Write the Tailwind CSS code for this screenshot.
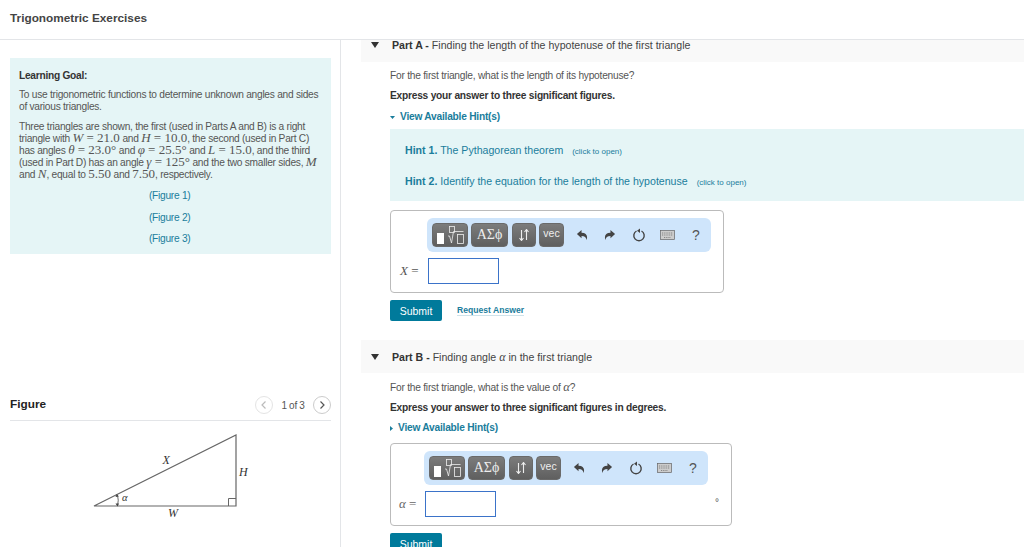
<!DOCTYPE html>
<html lang="en">
<head>
    <meta charset="UTF-8">
    <meta name="viewport" content="width=device-width, initial-scale=1.0">
    <title>Trigonometric Exercises</title>
    <script src="https://cdn.jsdelivr.net/npm/@tailwindcss/browser@4"></script>
</head>
<body class="h-[547px] overflow-hidden bg-white font-['Liberation_Sans',Arial,sans-serif] text-[#555]">
    <!-- Page title -->
    <header class="h-[40px] border-b border-[#e3e5e8] pl-[10px] pt-[11px]">
        <h1 class="text-[11.8px] leading-[15px] font-bold text-[#444]">Trigonometric Exercises</h1>
    </header>

    <div class="flex h-[507px]">
        <!-- Left column -->
        <aside class="w-[341px] shrink-0 border-r border-[#e3e5e8] pl-[10px] pr-[9px] pt-[18px]">
            <div class="h-[196px] bg-[#e5f5f6] pl-[9px] pr-[8px] pt-[12px] text-[10.2px] leading-[12px] tracking-[-0.27px]">
                <p class="font-bold text-[#333]">Learning Goal:</p>
                <p class="mt-[7px]">To use trigonometric functions to determine unknown angles and sides of various triangles.</p>
                <p class="mt-[8px]">Three triangles are shown, the first (used in Parts A and B) is a right triangle with <span class="font-['Liberation_Serif',serif] text-[13px] leading-[0] tracking-normal"><i>W</i> = 21.0</span> and <span class="font-['Liberation_Serif',serif] text-[13px] leading-[0] tracking-normal"><i>H</i> = 10.0</span>, the second (used in Part C) has angles <span class="font-['Liberation_Serif',serif] text-[13px] leading-[0] tracking-normal"><i>θ</i> = 23.0°</span> and <span class="font-['Liberation_Serif',serif] text-[13px] leading-[0] tracking-normal"><i>φ</i> = 25.5°</span> and <span class="font-['Liberation_Serif',serif] text-[13px] leading-[0] tracking-normal"><i>L</i> = 15.0</span>, and the third (used in Part D) has an angle <span class="font-['Liberation_Serif',serif] text-[13px] leading-[0] tracking-normal"><i>γ</i> = 125°</span> and the two smaller sides, <i class="font-['Liberation_Serif',serif] text-[13px] leading-[0] tracking-normal">M</i> and <i class="font-['Liberation_Serif',serif] text-[13px] leading-[0] tracking-normal">N</i>, equal to <span class="font-['Liberation_Serif',serif] text-[13px] leading-[0] tracking-normal">5.50</span> and <span class="font-['Liberation_Serif',serif] text-[13px] leading-[0] tracking-normal">7.50</span>, respectively.</p>
                <div class="mt-[9px] flex flex-col gap-[9.5px] pl-[130px] text-[#1a7d9c]">
                    <a>(Figure 1)</a>
                    <a>(Figure 2)</a>
                    <a>(Figure 3)</a>
                </div>
            </div>

            <!-- Figure -->
            <div class="mt-[142px] flex h-[25px] items-start justify-between border-b border-[#e3e5e8] pb-[6px]">
                <h2 class="text-[11.8px] leading-[16px] font-bold text-[#222]">Figure</h2>
                <div class="flex items-center">
                    <span class="flex size-[18px] items-center justify-center rounded-full border border-[#e4e4e4] text-[#bbb]">
                        <svg class="size-[10px]" viewBox="0 0 10 10" fill="none" stroke="currentColor" stroke-width="1.2"><path d="M6.5 1.5 3 5l3.5 3.5"/></svg>
                    </span>
                    <span class="w-[40px] text-center text-[10px] tracking-[-0.3px] text-[#555]">1 of 3</span>
                    <span class="flex size-[18px] items-center justify-center rounded-full border border-[#ccc] text-[#555]">
                        <svg class="size-[10px]" viewBox="0 0 10 10" fill="none" stroke="currentColor" stroke-width="1.2"><path d="M3.500 1.500 7 5 3.500 8.500"/></svg>
                    </span>
                </div>
            </div>
            <svg class="-ml-[10px] block" width="340" height="100" viewBox="0 422 340 100" font-family="'Liberation Serif', serif" font-style="italic" font-size="12" fill="#333">
                <path d="M94 507 236 436V507Z" fill="none" stroke="#666" stroke-width="1.2"/>
                <path d="M228.500 507V499.500H236" fill="none" stroke="#666"/>
                <path d="M117.500 496Q119 501 117.500 507" fill="none" stroke="#444" stroke-width="0.8"/>
                <path d="M115.500 498 116.800 495 118.800 497.500M115.500 504.500 117.500 507.500 119 504.500" fill="#444"/>
                <text x="162.500" y="465">X</text>
                <text x="239" y="477">H</text>
                <text x="168" y="518">W</text>
                <text x="122" y="502" font-size="10.500">α</text>
            </svg>
        </aside>

        <!-- Right column -->
        <main class="ml-[20px] min-w-0 flex-1 text-[10.2px] leading-[12px] tracking-[-0.23px]">
            <!-- Part A -->
            <div class="flex h-[22px] bg-[#f9f9f9]">
                <svg class="ml-[10px] mt-[2px] h-[6px] w-[8px] shrink-0" viewBox="0 0 8 6" fill="#333"><path d="M0 0h8L4 6z"/></svg>
                <p class="-mt-px ml-[13px] text-[10.6px] tracking-normal text-[#444]"><b class="text-[#333]">Part A -</b> Finding the length of the hypotenuse of the first triangle</p>
            </div>
            <section class="pl-[29px]">
                <p class="pt-[8px]">For the first triangle, what is the length of its hypotenuse?</p>
                <p class="mt-[8px] font-bold text-[#333]">Express your answer to three significant figures.</p>
                <div class="mt-[9px] flex items-center font-bold text-[#1a7d9c]">
                    <svg class="mr-[5px] h-[3px] w-[5px]" viewBox="0 0 5 3" fill="currentColor"><path d="M0 0h5L2.500 3z"/></svg>
                    View Available Hint(s)
                </div>
                <div class="mt-[6px] h-[72px] bg-[#e5f5f6] pl-[15px] pt-[14px] text-[10.6px] leading-[14px] tracking-normal text-[#1a7d9c]">
                    <p><b>Hint 1.</b> The Pythagorean theorem <span class="ml-[6px] text-[8px]">(click to open)</span></p>
                    <p class="mt-[15px]"><b>Hint 2.</b> Identify the equation for the length of the hypotenuse <span class="ml-[6px] text-[8px]">(click to open)</span></p>
                </div>

                <!-- Answer box A -->
                <div class="mt-[9px] h-[83px] w-[334px] rounded-[4px] border border-[#bbb] pl-[36px] pt-[7px] tracking-normal">
                    <div class="flex h-[34px] w-[284px] items-center rounded-[6px] bg-[#cfe5fb] pl-[5px]">
                        <span class="flex h-[24px] w-[36px] items-center justify-center rounded-[4px] border border-[#6a6a6a] bg-gradient-to-b from-[#7c7c7c] to-[#5f5f5f]">
                            <svg width="34" height="20" viewBox="0 0 34 20" fill="none" stroke="#eee" stroke-width="0.8"><rect x="4" y="8" width="7" height="11" fill="#fff" stroke="none"/><rect x="16.500" y="1.500" width="5" height="6"/><path d="M15 11l1.500 0 2 7 2-11.500h10"/><rect x="24.500" y="9.500" width="6" height="9"/></svg>
                        </span>
                        <span class="ml-[3px] flex h-[24px] w-[37px] items-center justify-center rounded-[4px] border border-[#6a6a6a] bg-gradient-to-b from-[#7c7c7c] to-[#5f5f5f] font-['Liberation_Serif',serif] text-[14px] text-[#eee]">ΑΣϕ</span>
                        <span class="ml-[4px] flex h-[24px] w-[24px] items-center justify-center rounded-[4px] border border-[#6a6a6a] bg-gradient-to-b from-[#7c7c7c] to-[#5f5f5f]">
                            <svg width="12" height="12" viewBox="0 0 12 12" fill="none" stroke="#eee" stroke-width="1.1"><path d="M3.500 1v10M1.500 9l2 2.500L5.500 9M8.500 11V1M6.500 3l2-2.500 2 2.500"/></svg>
                        </span>
                        <span class="ml-[3px] flex h-[24px] w-[25px] items-center justify-center rounded-[4px] border border-[#6a6a6a] bg-gradient-to-b from-[#7c7c7c] to-[#5f5f5f] pb-[4px] text-[10.5px] text-[#eee]">vec</span>
                        <span class="ml-[4px] flex w-[28px] justify-center"><svg width="12" height="12" viewBox="0 0 13 13" fill="#444"><path d="M1 5.500 6 1v3c4 0 6 2 6 5 0 1-.3 2-.8 3 .1-3-2-4.500-5.200-4.500V10z"/></svg></span>
                        <span class="flex w-[28px] justify-center"><svg width="12" height="12" viewBox="0 0 13 13" fill="#444"><path d="M12 5.500 7 1v3C3 4 1 6 1 9c0 1 .3 2 .8 3-.1-3 2-4.500 5.200-4.500V10z"/></svg></span>
                        <span class="flex w-[29px] justify-center"><svg width="14" height="14" viewBox="0 0 14 14" fill="none" stroke="#444" stroke-width="1.400"><path d="M4.500 3a5.200 5.200 0 1 0 5 0"/><path d="M8 0.500v4.500l-3-2.200z" fill="#444" stroke="none"/></svg></span>
                        <span class="flex w-[29px] justify-center"><svg width="15" height="10" viewBox="0 0 15 10" fill="#ccc" stroke="#666" stroke-width="0.7"><rect x="0.500" y="0.500" width="14" height="9"/><path d="M2 3h11M2 5h11M4 7.500h7" stroke="#666" stroke-dasharray="1 0.800"/></svg></span>
                        <span class="flex w-[28px] justify-center text-[14px] text-[#555]">?</span>
                    </div>
                    <div class="mt-[6px] flex items-center">
                        <span class="-ml-[27px] w-[28px] font-['Liberation_Serif',serif] text-[13px] text-[#555]"><i>X</i> =</span>
                        <div class="h-[26px] w-[71px] border border-[#3b73c9]"></div>
                    </div>
                </div>

                <div class="mt-[7px] flex items-center tracking-normal">
                    <button class="h-[21px] w-[52px] rounded-[2px] bg-[#007a9b] text-[10.500px] text-white">Submit</button>
                    <a class="ml-[15px] border-b border-[#cfe3ea] text-[8.6px] leading-[10px] font-bold text-[#1a7d9c]">Request Answer</a>
                </div>
            </section>

            <!-- Part B -->
            <div class="mt-[19px] flex h-[33px] items-center bg-[#f9f9f9]">
                <svg class="ml-[10px] h-[6px] w-[8px] shrink-0" viewBox="0 0 8 6" fill="#333"><path d="M0 0h8L4 6z"/></svg>
                <p class="ml-[13px] text-[10.6px] tracking-normal text-[#444]"><b class="text-[#333]">Part B -</b> Finding angle <i class="font-['Liberation_Serif',serif] text-[12px] leading-[0]">α</i> in the first triangle</p>
            </div>
            <section class="pl-[29px]">
                <p class="pt-[9px]">For the first triangle, what is the value of <i class="font-['Liberation_Serif',serif] text-[12.500px] leading-[0] tracking-normal">α</i>?</p>
                <p class="mt-[8px] font-bold text-[#333]">Express your answer to three significant figures in degrees.</p>
                <div class="mt-[8px] flex items-center font-bold text-[#1a7d9c]">
                    <svg class="mr-[5px] h-[5px] w-[3px]" viewBox="0 0 3 5" fill="currentColor"><path d="M0 0v5l3-2.500z"/></svg>
                    View Available Hint(s)
                </div>

                <!-- Answer box B -->
                <div class="relative mt-[9px] h-[83px] w-[342px] rounded-[4px] border border-[#bbb] pl-[33px] pt-[7px] tracking-normal">
                    <div class="flex h-[34px] w-[284px] items-center rounded-[6px] bg-[#cfe5fb] pl-[5px]">
                        <span class="flex h-[24px] w-[36px] items-center justify-center rounded-[4px] border border-[#6a6a6a] bg-gradient-to-b from-[#7c7c7c] to-[#5f5f5f]">
                            <svg width="34" height="20" viewBox="0 0 34 20" fill="none" stroke="#eee" stroke-width="0.8"><rect x="4" y="8" width="7" height="11" fill="#fff" stroke="none"/><rect x="16.500" y="1.500" width="5" height="6"/><path d="M15 11l1.500 0 2 7 2-11.500h10"/><rect x="24.500" y="9.500" width="6" height="9"/></svg>
                        </span>
                        <span class="ml-[3px] flex h-[24px] w-[37px] items-center justify-center rounded-[4px] border border-[#6a6a6a] bg-gradient-to-b from-[#7c7c7c] to-[#5f5f5f] font-['Liberation_Serif',serif] text-[14px] text-[#eee]">ΑΣϕ</span>
                        <span class="ml-[4px] flex h-[24px] w-[24px] items-center justify-center rounded-[4px] border border-[#6a6a6a] bg-gradient-to-b from-[#7c7c7c] to-[#5f5f5f]">
                            <svg width="12" height="12" viewBox="0 0 12 12" fill="none" stroke="#eee" stroke-width="1.1"><path d="M3.500 1v10M1.500 9l2 2.500L5.500 9M8.500 11V1M6.500 3l2-2.500 2 2.500"/></svg>
                        </span>
                        <span class="ml-[3px] flex h-[24px] w-[25px] items-center justify-center rounded-[4px] border border-[#6a6a6a] bg-gradient-to-b from-[#7c7c7c] to-[#5f5f5f] pb-[4px] text-[10.5px] text-[#eee]">vec</span>
                        <span class="ml-[4px] flex w-[28px] justify-center"><svg width="12" height="12" viewBox="0 0 13 13" fill="#444"><path d="M1 5.500 6 1v3c4 0 6 2 6 5 0 1-.3 2-.8 3 .1-3-2-4.500-5.200-4.500V10z"/></svg></span>
                        <span class="flex w-[28px] justify-center"><svg width="12" height="12" viewBox="0 0 13 13" fill="#444"><path d="M12 5.500 7 1v3C3 4 1 6 1 9c0 1 .3 2 .8 3-.1-3 2-4.500 5.200-4.500V10z"/></svg></span>
                        <span class="flex w-[29px] justify-center"><svg width="14" height="14" viewBox="0 0 14 14" fill="none" stroke="#444" stroke-width="1.400"><path d="M4.500 3a5.200 5.200 0 1 0 5 0"/><path d="M8 0.500v4.500l-3-2.200z" fill="#444" stroke="none"/></svg></span>
                        <span class="flex w-[29px] justify-center"><svg width="15" height="10" viewBox="0 0 15 10" fill="#ccc" stroke="#666" stroke-width="0.7"><rect x="0.500" y="0.500" width="14" height="9"/><path d="M2 3h11M2 5h11M4 7.500h7" stroke="#666" stroke-dasharray="1 0.800"/></svg></span>
                        <span class="flex w-[28px] justify-center text-[14px] text-[#555]">?</span>
                    </div>
                    <div class="mt-[6px] flex items-center">
                        <span class="-ml-[25px] w-[26px] font-['Liberation_Serif',serif] text-[13px] text-[#666]"><i>α</i> =</span>
                        <div class="h-[26px] w-[71px] border border-[#3b73c9]"></div>
                        <span class="absolute left-[324px] top-[53px] text-[10px] text-[#555]">°</span>
                    </div>
                </div>

                <button class="mt-[7px] h-[21px] w-[52px] rounded-[2px] bg-[#007a9b] text-[10.500px] tracking-normal text-white">Submit</button>
            </section>
        </main>
    </div>
</body>
</html>
